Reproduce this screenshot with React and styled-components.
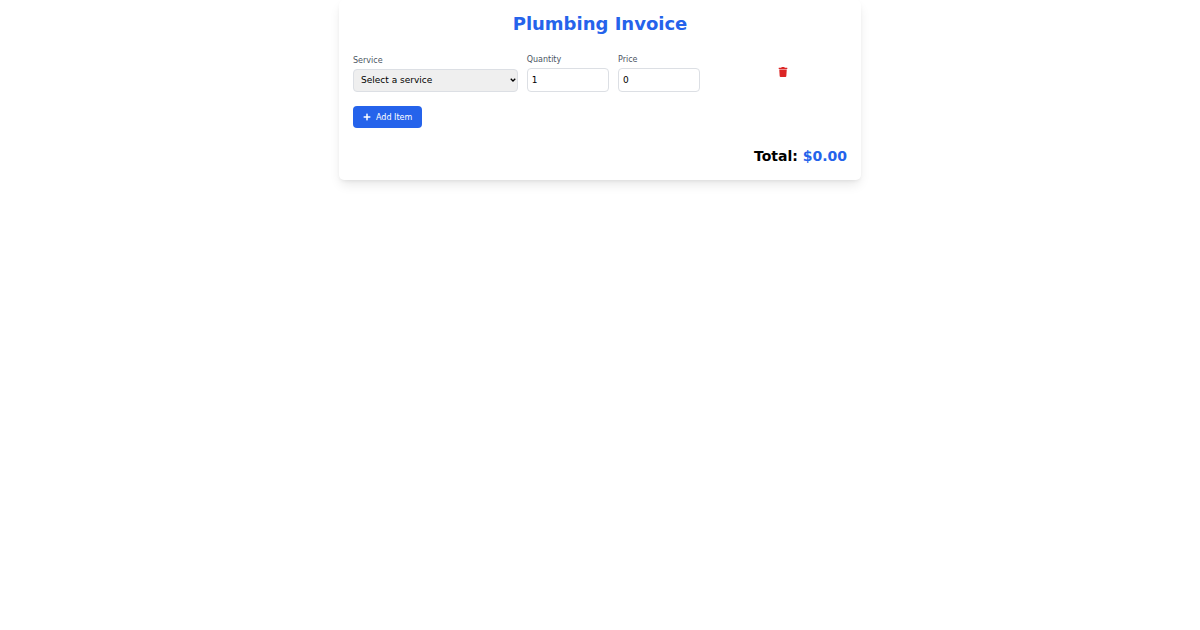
import React, { useState } from "react";
import styled, { createGlobalStyle } from "styled-components";
import { FaPlus, FaTrash } from "react-icons/fa";

const GlobalStyle = createGlobalStyle`
    *, *::before, *::after {
        box-sizing: border-box;
    }
    body {
        margin: 0;
        min-height: 100vh;
        background: #fff;
        color: #000;
        font-family: "DejaVu Sans", sans-serif;
    }
    button, input, select {
        font-family: inherit;
    }
`;

const Card = styled.main`
    max-width: 522px;
    margin: 0 auto;
    padding: 9px 14px 12px;
    background: #fff;
    border-radius: 5px;
    box-shadow: 0 6px 12px -2px rgba(0, 0, 0, 0.1), 0 2px 4px -2px rgba(0, 0, 0, 0.1);
`;

const Title = styled.h1`
    margin: 0 0 13px;
    color: #2563eb;
    font-size: 18px;
    line-height: 30px;
    font-weight: 700;
    text-align: center;
`;

const ItemRow = styled.div`
    display: flex;
    align-items: flex-end;
    gap: 9px;
    margin-bottom: 14px;
`;

const Field = styled.div`
    flex: none;
    width: ${props => props.$width};
`;

const Label = styled.label`
    display: block;
    color: #4b5563;
    font-size: 8px;
    line-height: 16px;
`;

const SelectWrap = styled.div`
    position: relative;

    svg {
        position: absolute;
        top: 9px;
        right: 2px;
        width: 6px;
        height: 4px;
        pointer-events: none;
    }
`;

const Select = styled.select`
    display: block;
    width: 100%;
    height: 23px;
    padding: 0 12px 1px 7px;
    border: 1px solid #dcdfe4;
    border-radius: 4px;
    background: #efefef;
    color: #000;
    font-size: 9px;
    appearance: none;
`;

const Input = styled.input`
    display: block;
    width: 100%;
    height: 24px;
    padding: 0 4px;
    border: 1px solid #dcdfe4;
    border-radius: 4px;
    background: #fff;
    color: #000;
    font-size: 9px;
    appearance: textfield;
`;

const RemoveCell = styled.div`
    display: flex;
    flex: 1;
    align-self: center;
    justify-content: center;
    margin-left: 9px;
`;

const RemoveButton = styled.button`
    display: flex;
    padding: 0;
    border: none;
    background: none;
    color: #dc2626;
    font-size: 10px;
    cursor: pointer;
`;

const AddButton = styled.button`
    display: flex;
    align-items: center;
    gap: 5px;
    height: 22px;
    padding: 0 10px;
    border: none;
    border-radius: 4px;
    background: #2563eb;
    color: #fff;
    font-size: 8px;
    cursor: pointer;
`;

const Total = styled.div`
    margin-top: 16px;
    font-size: 14px;
    line-height: 24px;
    font-weight: 700;
    text-align: right;

    span {
        color: #2563eb;
    }
`;

const services = [
    { name: "Drain Cleaning", price: 100 },
    { name: "Pipe Repair", price: 150 },
    { name: "Water Heater Installation", price: 500 },
];

const emptyItem = { service: "", quantity: 1, price: 0 };

function App() {
    const [items, setItems] = useState([emptyItem]);

    const updateItem = (index, changes) => {
        setItems(items.map((item, i) => (i === index ? { ...item, ...changes } : item)));
    };

    const onService = (index, name) => {
        const service = services.find(s => s.name === name);
        updateItem(index, { service: name, price: service ? service.price : 0 });
    };

    const total = items.reduce((sum, item) => sum + item.quantity * item.price, 0);

    return (
        <>
            <GlobalStyle />
            <Card>
                <Title>Plumbing Invoice</Title>
                {items.map((item, index) => (
                    <ItemRow key={index}>
                        <Field $width="33.333%">
                            <Label htmlFor={`service-${index}`}>Service</Label>
                            <SelectWrap>
                                <Select
                                    id={`service-${index}`}
                                    value={item.service}
                                    onChange={e => onService(index, e.target.value)}
                                >
                                    <option value="">Select a service</option>
                                    {services.map(s => (
                                        <option key={s.name} value={s.name}>{s.name}</option>
                                    ))}
                                </Select>
                                <svg viewBox="0 0 12 8" fill="none" stroke="#000" strokeWidth="2.6" aria-hidden="true">
                                    <path d="M1.5 1.5 6 6l4.5-4.5" />
                                </svg>
                            </SelectWrap>
                        </Field>
                        <Field $width="16.667%">
                            <Label htmlFor={`quantity-${index}`}>Quantity</Label>
                            <Input
                                id={`quantity-${index}`}
                                type="number"
                                min="1"
                                value={item.quantity}
                                onChange={e => updateItem(index, { quantity: e.target.value })}
                            />
                        </Field>
                        <Field $width="16.667%">
                            <Label htmlFor={`price-${index}`}>Price</Label>
                            <Input
                                id={`price-${index}`}
                                type="number"
                                min="0"
                                value={item.price}
                                onChange={e => updateItem(index, { price: e.target.value })}
                            />
                        </Field>
                        <RemoveCell>
                            <RemoveButton
                                type="button"
                                aria-label="Remove item"
                                onClick={() => setItems(items.filter((_, i) => i !== index))}
                            >
                                <FaTrash />
                            </RemoveButton>
                        </RemoveCell>
                    </ItemRow>
                ))}
                <AddButton type="button" onClick={() => setItems([...items, emptyItem])}>
                    <FaPlus />
                    Add Item
                </AddButton>
                <Total>
                    Total: <span>${total.toFixed(2)}</span>
                </Total>
            </Card>
        </>
    );
}

export default App;
